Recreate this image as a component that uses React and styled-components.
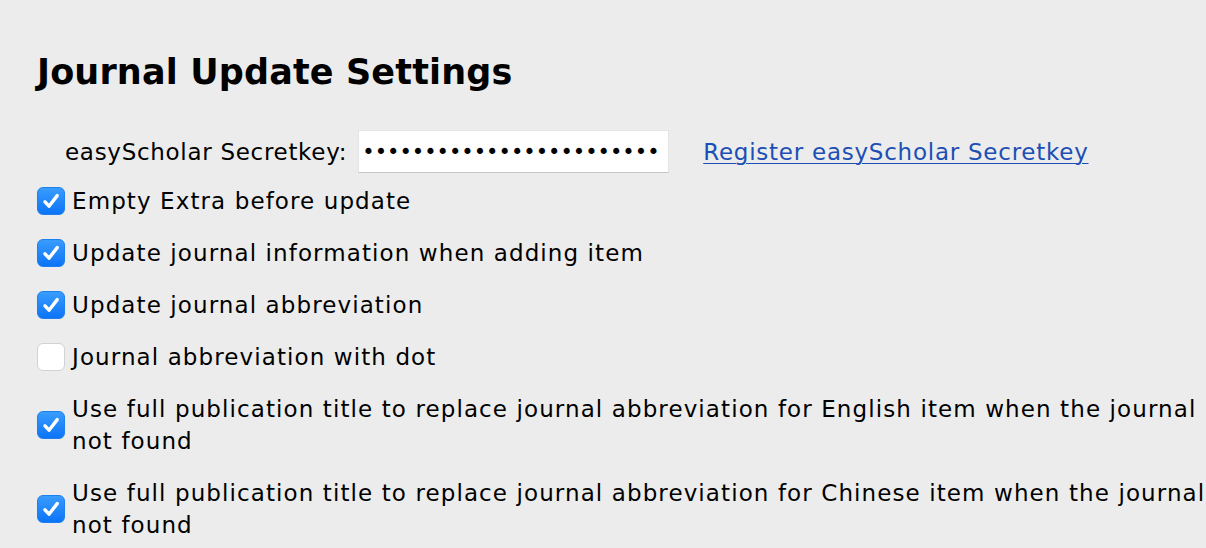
import React from "react";
import styled, { createGlobalStyle } from "styled-components";

const Global = createGlobalStyle`
  html, body {
    margin: 0;
    padding: 0;
    background: #ececec;
  }
  body {
    font-family: "DejaVu Sans", "Liberation Sans", sans-serif;
    color: #000;
  }
`;

const Page = styled.div`
  width: 1206px;
  min-height: 548px;
  padding: 52px 0 0 37px;
  box-sizing: border-box;
  overflow: hidden;
`;

const Title = styled.h1`
  margin: 0 0 39px;
  font-size: 35px;
  line-height: 40px;
  font-weight: bold;
  letter-spacing: 0.15px;
`;

const KeyRow = styled.div`
  display: flex;
  align-items: center;
  height: 41px;
  padding-left: 28px;
  margin-bottom: 13px;
  font-size: 23px;
  letter-spacing: 0.7px;
  white-space: nowrap;
`;

const KeyLabel = styled.span`
  margin-right: 11px;
`;

const KeyInput = styled.div`
  width: 311px;
  height: 43px;
  box-sizing: border-box;
  background: #fff;
  border: 1px solid #e4e4e4;
  border-bottom-color: #c6c6c6;
  display: flex;
  align-items: center;
  padding-left: 3px;
  font-size: 21px;
  letter-spacing: 0;
  overflow: hidden;
`;

const Link = styled.a`
  margin-left: 34px;
  color: #1c4fb5;
  letter-spacing: 0.75px;
  text-decoration: underline;
  text-decoration-thickness: 1px;
  text-underline-offset: 3px;
`;

const List = styled.div`
  display: flex;
  flex-direction: column;
  gap: 20px;
`;

const Option = styled.label`
  display: flex;
  align-items: center;
  gap: 7px;
  font-size: 23px;
  letter-spacing: 1.1px;
  line-height: 32px;
  white-space: nowrap;
`;

const Box = styled.span`
  flex: none;
  width: 28px;
  height: 28px;
  box-sizing: border-box;
  border-radius: 6px;
  display: flex;
  align-items: center;
  justify-content: center;
  background: ${(p) =>
    p.$checked ? "linear-gradient(#3a9cff, #0b74f6)" : "#fff"};
  border: 1px solid ${(p) => (p.$checked ? "#1c80f2" : "#d2d2d2")};
`;

const Text = styled.span`
  display: flex;
  flex-direction: column;
`;

const options = [
  { lines: ["Empty Extra before update"], checked: true },
  { lines: ["Update journal information when adding item"], checked: true },
  { lines: ["Update journal abbreviation"], checked: true },
  { lines: ["Journal abbreviation with dot"], checked: false },
  {
    lines: [
      "Use full publication title to replace journal abbreviation for English item when the journal",
      "not found",
    ],
    checked: true,
  },
  {
    lines: [
      "Use full publication title to replace journal abbreviation for Chinese item when the journal",
      "not found",
    ],
    checked: true,
  },
];

function Check({ checked }) {
  return (
    <Box $checked={checked}>
      {checked && (
        <svg width="26" height="26" viewBox="0 0 26 26">
          <path
            d="M7 13.8 L11 18.2 L19.2 7.6"
            fill="none"
            stroke="#fff"
            strokeWidth="3.4"
            strokeLinecap="round"
            strokeLinejoin="round"
          />
        </svg>
      )}
    </Box>
  );
}

export default function App() {
  return (
    <>
      <Global />
      <Page>
        <Title>Journal Update Settings</Title>
        <KeyRow>
          <KeyLabel>easyScholar Secretkey:</KeyLabel>
          <KeyInput>{"\u2022".repeat(24)}</KeyInput>
          <Link href="#">Register easyScholar Secretkey</Link>
        </KeyRow>
        <List>
          {options.map((o) => (
            <Option key={o.lines[0]}>
              <Check checked={o.checked} />
              <Text>
                {o.lines.map((l) => (
                  <span key={l}>{l}</span>
                ))}
              </Text>
            </Option>
          ))}
        </List>
      </Page>
    </>
  );
}
